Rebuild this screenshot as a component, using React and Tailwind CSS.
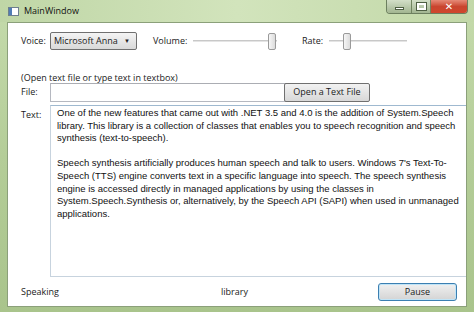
import React from "react";

const lines1 = [
  "One of the new features that came out with .NET 3.5 and 4.0 is the addition of System.Speech",
  "library. This library is a collection of classes that enables you to speech recognition and speech",
  "synthesis (text-to-speech).",
];
const lines2 = [
  "Speech synthesis artificially produces human speech and talk to users. Windows 7's Text-To-",
  "Speech (TTS) engine converts text in a specific language into speech. The speech synthesis",
  "engine is accessed directly in managed applications by using the classes in",
  "System.Speech.Synthesis or, alternatively, by the Speech API (SAPI) when used in unmanaged",
  "applications.",
];

function Slider({ trackW, thumbLeft }) {
  return (
    <div className="relative h-[17px] shrink-0" style={{ width: trackW }}>
      <div className="absolute left-0 right-0 top-[7px] h-[3px] bg-[#e4e4e4] border-t border-[#c8c8c8] border-b border-b-white" />
      <div
        className="absolute top-0 h-[17px] w-[8px] rounded-[2px] border border-[#9a9a9a] bg-gradient-to-r from-[#f6f6f6] to-[#dcdcdc]"
        style={{ left: thumbLeft }}
      />
    </div>
  );
}

export default function App() {
  const label = "font-['Open_Sans',sans-serif] text-[9px] leading-[12px] text-[#1a1a1a] shrink-0 whitespace-nowrap";
  return (
    <div className="w-[474px] h-[312px] overflow-hidden flex flex-col bg-gradient-to-b from-[#c5dbac] via-[#b4cd98] to-[#a9c48c]">
      {/* Title bar */}
      <div className="h-[22px] shrink-0 flex items-start relative bg-gradient-to-r from-[#bfd6a6] via-[#d2e4bc] to-[#c2d8a8]">
        <div className="mt-[7px] ml-[8px] w-[11px] h-[9px] border border-[#6d7f8e] bg-white flex">
          <div className="w-[3px] h-full bg-[#4f7db5]" />
        </div>
        <div className="ml-[5px] mt-[5px] font-['Open_Sans',sans-serif] text-[9px] leading-[12px] text-[#111]">MainWindow</div>
        <div className="ml-auto mr-[6px] flex h-[14px] border border-t-0 border-[#6c7f5f] rounded-b-[4px] overflow-hidden">
          <div className="w-[25px] h-full bg-gradient-to-b from-[#d3dfc8] to-[#a2b591] border-r border-[#70845f] flex items-center justify-center">
            <div className="w-[9px] h-[3px] mt-[4px] bg-white border border-[#4e5f43]" />
          </div>
          <div className="w-[19px] h-full bg-gradient-to-b from-[#d3dfc8] to-[#a2b591] border-r border-[#70845f] flex items-center justify-center">
            <div className="w-[9px] h-[7px] border-[2px] border-white outline outline-1 outline-[#4e5f43]" />
          </div>
          <div className="w-[36px] h-full bg-gradient-to-b from-[#e58a77] via-[#c9452f] to-[#d0472c] flex items-center justify-center text-white font-['DejaVu_Sans',sans-serif] text-[10px] font-bold leading-none">
            ✕
          </div>
        </div>
      </div>
      {/* Client area */}
      <div className="ml-[7px] w-[460px] h-[285px] shrink-0 bg-white border border-[#8ba07a] flex flex-col overflow-hidden">
        {/* Row 1 */}
        <div className="flex items-center mt-[9px] h-[18px]">
          <span className={`${label} ml-[13px] w-[29px]`}>Voice:</span>
          <div className="w-[87px] h-[18px] shrink-0 rounded-[2px] border border-[#707070] bg-gradient-to-b from-[#f4f4f4] to-[#d9d9d9] flex items-center pl-[3px] pr-[6px]">
            <span className={`${label} text-[#000]`}>Microsoft Anna</span>
            <span className="ml-auto text-[6px] text-[#222]">▼</span>
          </div>
          <span className={`${label} ml-[16px] w-[40px]`}>Volume:</span>
          <Slider trackW={84} thumbLeft={75} />
          <span className={`${label} ml-[25px] w-[27px]`}>Rate:</span>
          <Slider trackW={78} thumbLeft={14} />
        </div>
        {/* Row 2 */}
        <div className={`${label} ml-[13px] mt-[22px] h-[10px] leading-[11px]`}>(Open text file or type text in textbox)</div>
        {/* Row 3 */}
        <div className="flex items-center h-[20px]">
          <span className={`${label} ml-[13px] w-[29px]`}>File:</span>
          <div className="w-[240px] h-[19px] shrink-0 border border-[#b5b8c0] border-t-[#abadb3] bg-white" />
          <div className="-ml-[6px] w-[86px] h-[19px] shrink-0 rounded-[2px] border border-[#707070] bg-gradient-to-b from-[#f2f2f2] to-[#d8d8d8] flex items-center justify-center">
            <span className={`${label} text-[#000]`}>Open a Text File</span>
          </div>
        </div>
        {/* Row 4 */}
        <div className="flex mt-[3px] min-w-0">
          <span className={`${label} ml-[13px] w-[29px] mt-[4px]`}>Text:</span>
          <div className="flex-1 min-w-0 overflow-hidden h-[172px] border border-[#c7d3de] border-t-[#9fb9d0] border-r-0 bg-white pl-[6px] pt-[1px] font-['Liberation_Sans',Arial,sans-serif] text-[9.5px] leading-[12.6px] text-[#111] whitespace-nowrap">
            {lines1.map((l) => (
              <div key={l}>{l}</div>
            ))}
            <div className="h-[12.6px]" />
            {lines2.map((l) => (
              <div key={l}>{l}</div>
            ))}
          </div>
        </div>
        {/* Row 5 */}
        <div className="flex items-center mt-[6px] h-[18px]">
          <span className={`${label} ml-[13px] w-[200px]`}>Speaking</span>
          <span className={`${label}`}>library</span>
          <div className="ml-auto mr-[9px] w-[79px] h-[18px] rounded-[3px] border border-[#3c7fb1] bg-gradient-to-b from-[#f0f0f0] to-[#d4d4d4] shadow-[inset_0_0_0_1px_#c0e4f7] flex items-center justify-center">
            <span className={`${label} text-[#000]`}>Pause</span>
          </div>
        </div>
      </div>
    </div>
  );
}
